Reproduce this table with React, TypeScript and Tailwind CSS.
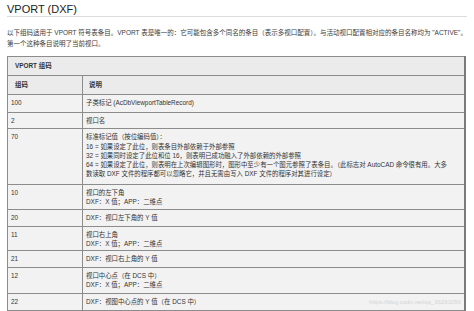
import { ReactNode } from "react";

const font = { fontFamily: '"Liberation Sans", "Noto Sans CJK SC", sans-serif' };

interface RowProps {
  code: string;
  h: string;
  children: ReactNode;
}

const Row = ({ code, h, children }: RowProps) => (
  <tr className={`${h} bg-[#f2f2f2] align-top`}>
    <td className="border border-[#8c8c8c] pl-[3px] pt-[3px] leading-[9px]">{code}</td>
    <td className="border border-[#8c8c8c] border-r-2 border-r-[#7a7a7a] pl-[3px] pt-[3px] leading-[9px]">
      {children}
    </td>
  </tr>
);

export default function App() {
  return (
    <div className="w-[474px] h-[311px] overflow-hidden bg-white text-[#333]" style={font}>
      <div className="mx-[7px] w-[460px]">
        <h1 className="pt-[3px] text-[11px] leading-[13px] text-[#222] border-b border-[#dcdcdc]">
          VPORT (DXF)
        </h1>
        <p className="mt-[11px] text-[6.5px] leading-[10.5px] text-[#3a3a3a]">
          <span className="whitespace-nowrap">
            以下组码适用于 VPORT 符号表条目。VPORT 表是唯一的：它可能包含多个同名的条目（表示多视口配置）。与活动视口配置相对应的条目名称均为 "ACTIVE"。
          </span>
          <br />
          第一个这种条目说明了当前视口。
        </p>
        <table className="mt-[7px] w-[459px] border-collapse text-[6.4px] text-[#333]">
          <colgroup>
            <col className="w-[75px]" />
            <col />
          </colgroup>
          <thead>
            <tr className="h-[19px] bg-[#ebebeb]">
              <th colSpan={2} className="border border-[#8c8c8c] border-r-2 border-r-[#7a7a7a] pl-[7px] text-left font-bold">
                VPORT 组码
              </th>
            </tr>
            <tr className="h-[19px] bg-[#ebebeb]">
              <th className="border border-[#8c8c8c] pl-[7px] text-left font-bold">组码</th>
              <th className="border border-[#8c8c8c] border-r-2 border-r-[#7a7a7a] pl-[6px] text-left font-bold">说明</th>
            </tr>
          </thead>
          <tbody>
            <Row code="100" h="h-[18px]">子类标记 (AcDbViewportTableRecord)</Row>
            <Row code="2" h="h-[16px]">视口名</Row>
            <Row code="70" h="h-[56px]">
              <div className="mb-[1px]">标准标记值（按位编码值）：</div>
              <div className="whitespace-nowrap">16 = 如果设定了此位，则表条目外部依赖于外部参照</div>
              <div className="whitespace-nowrap">32 = 如果同时设定了此位和位 16，则表明已成功融入了外部依赖的外部参照</div>
              <div className="whitespace-nowrap">64 = 如果设定了此位，则表明在上次编辑图形时，图形中至少有一个图元参照了表条目。（此标志对 AutoCAD 命令很有用。大多</div>
              <div className="whitespace-nowrap">数读取 DXF 文件的程序都可以忽略它，并且无需由写入 DXF 文件的程序对其进行设定）</div>
            </Row>
            <Row code="10" h="h-[25px]">
              <div>视口的左下角</div>
              <div>DXF：X 值；APP：二维点</div>
            </Row>
            <Row code="20" h="h-[17px]">DXF：视口左下角的 Y 值</Row>
            <Row code="11" h="h-[24px]">
              <div>视口右上角</div>
              <div>DXF：X 值；APP：二维点</div>
            </Row>
            <Row code="21" h="h-[17px]">DXF：视口右上角的 Y 值</Row>
            <Row code="12" h="h-[26px]">
              <div>视口中心点（在 DCS 中）</div>
              <div>DXF：X 值；APP：二维点</div>
            </Row>
            <tr className="h-[17px] bg-[#f2f2f2] align-top">
              <td className="border border-[#8c8c8c] pl-[3px] pt-[3px] leading-[9px]">22</td>
              <td className="relative border border-[#8c8c8c] border-r-2 border-r-[#7a7a7a] pl-[3px] pt-[3px] leading-[9px]">
                DXF：视图中心点的 Y 值（在 DCS 中）
                <span className="absolute right-[3px] top-[4px] text-[6px] text-[#d4d4d4]">
                  https://blog.csdn.net/qq_36293056
                </span>
              </td>
            </tr>
            <Row code="" h="h-[17px]">{""}</Row>
          </tbody>
        </table>
      </div>
    </div>
  );
}
